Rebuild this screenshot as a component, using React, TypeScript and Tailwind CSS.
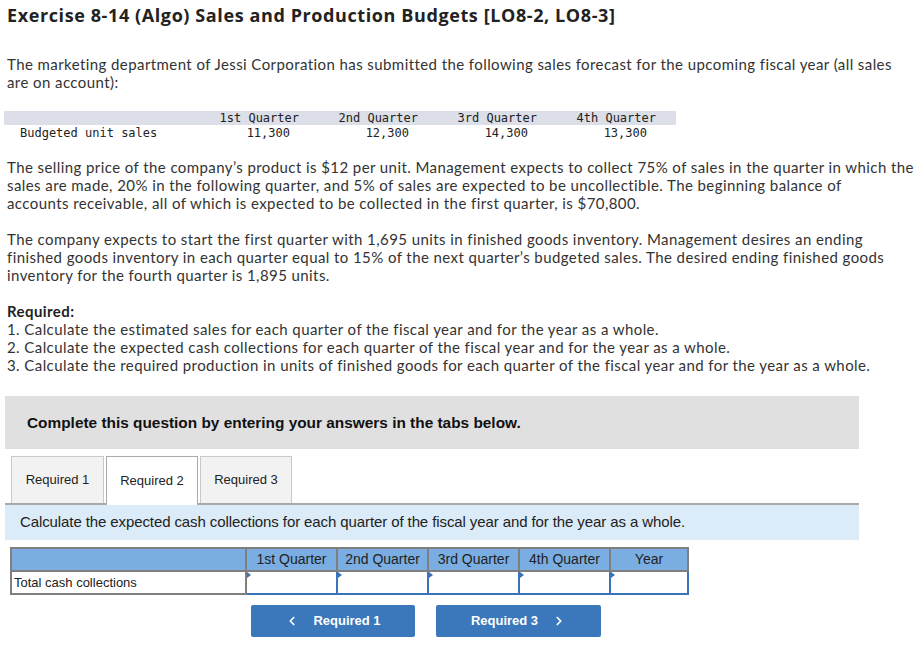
import { ChevronLeft, ChevronRight } from "lucide-react";

const body = "font-['Lato',sans-serif] text-[15px] leading-[18px] tracking-[0.42px] text-[#333]";

const quarters = ["1st Quarter", "2nd Quarter", "3rd Quarter", "4th Quarter"];
const unitSales = ["11,300", "12,300", "14,300", "13,300"];

const Lines = ({ lines }: { lines: string[] }) => (
  <>
    {lines.map((l) => (
      <div key={l} className="whitespace-nowrap">
        {l}
      </div>
    ))}
  </>
);

const InputCell = () => (
  <td className="relative h-[22px] border-2 border-[#3b73b9] bg-white p-0">
    {/* little marker triangle */}
    <span className="absolute left-0 top-0 h-0 w-0 border-y-[3px] border-l-[4px] border-y-transparent border-l-[#3b73b9]" />
  </td>
);

export default function App() {
  return (
    <div className="min-h-screen w-[915px] bg-white">
      <div className="px-[7px] pt-[4px]">
        {/* Title */}
        <h1 className="font-['Open_Sans',sans-serif] text-[18px] font-bold leading-[22px] tracking-[0.6px] text-[#222]">
          Exercise 8-14 (Algo) Sales and Production Budgets [LO8-2, LO8-3]
        </h1>

        <div className={`${body} mt-[29px]`}>
          <Lines
            lines={[
              "The marketing department of Jessi Corporation has submitted the following sales forecast for the upcoming fiscal year (all sales",
              "are on account):",
            ]}
          />
        </div>
      </div>

      {/* Unit sales forecast */}
      <table className="ml-[4px] mt-[20px] border-collapse font-['DejaVu_Sans_Mono',monospace] text-[12px] leading-[13px] text-[#222]">
        <thead>
          <tr className="bg-[#dcdfe8]">
            <th className="w-[196px] p-0" />
            {quarters.map((q) => (
              <th key={q} className="w-[119px] p-0 pr-[20px] pt-[1px] text-right font-normal">
                {q}
              </th>
            ))}
          </tr>
        </thead>
        <tbody>
          <tr>
            <td className="pl-[16px] pt-[2px] text-left">Budgeted unit sales</td>
            {unitSales.map((v) => (
              <td key={v} className="pr-[29px] pt-[2px] text-right">
                {v}
              </td>
            ))}
          </tr>
        </tbody>
      </table>

      <div className={`${body} px-[7px]`}>
        <div className="mt-[18px]">
          <Lines
            lines={[
              "The selling price of the company’s product is $12 per unit. Management expects to collect 75% of sales in the quarter in which the",
              "sales are made, 20% in the following quarter, and 5% of sales are expected to be uncollectible. The beginning balance of",
              "accounts receivable, all of which is expected to be collected in the first quarter, is $70,800.",
            ]}
          />
        </div>
        <div className="mt-[18px]">
          <Lines
            lines={[
              "The company expects to start the first quarter with 1,695 units in finished goods inventory. Management desires an ending",
              "finished goods inventory in each quarter equal to 15% of the next quarter’s budgeted sales. The desired ending finished goods",
              "inventory for the fourth quarter is 1,895 units.",
            ]}
          />
        </div>
        <div className="mt-[18px]">
          <div className="font-bold text-[#222]">Required:</div>
          <Lines
            lines={[
              "1. Calculate the estimated sales for each quarter of the fiscal year and for the year as a whole.",
              "2. Calculate the expected cash collections for each quarter of the fiscal year and for the year as a whole.",
              "3. Calculate the required production in units of finished goods for each quarter of the fiscal year and for the year as a whole.",
            ]}
          />
        </div>
      </div>

      {/* Tabs area */}
      <div className="ml-[5px] mt-[22px] w-[854px]">
        <div className="flex h-[53px] items-center bg-[#e0e0e0] pl-[22px] font-['Liberation_Sans',sans-serif] text-[15.4px] font-bold text-[#111]">
          Complete this question by entering your answers in the tabs below.
        </div>

        <div className="mt-[7px] flex gap-[2px] border-b-2 border-[#a9a9a9] pl-[6px] font-['Liberation_Sans',sans-serif] text-[13px] text-[#222]">
          <div className="-mb-[2px] flex h-[47px] w-[93px] items-center justify-center border border-b-0 border-[#c9c9c9] bg-[#f2f2f2]">
            Required 1
          </div>
          <div className="-mb-[2px] flex h-[49px] w-[92px] items-center justify-center border border-b-0 border-[#a9a9a9] bg-white">
            Required 2
          </div>
          <div className="-mb-[2px] flex h-[47px] w-[92px] items-center justify-center border border-b-0 border-[#c9c9c9] bg-[#f2f2f2]">
            Required 3
          </div>
        </div>

        <div className="flex h-[35px] items-center bg-[#dbebf8] pl-[15px] font-['Liberation_Sans',sans-serif] text-[15px] tracking-[-0.1px] text-[#222]">
          Calculate the expected cash collections for each quarter of the fiscal year and for the year as a whole.
        </div>

        {/* Answer table */}
        <table className="ml-[5px] mt-[7px] border-collapse font-['Liberation_Sans',sans-serif] text-[13px] text-[#222]">
          <thead>
            <tr className="h-[23px] bg-[#7aaee3] text-[14px]">
              <th className="w-[235px] border-2 border-r-0 border-[#7f7f7f]" />
              {quarters.map((q) => (
                <th key={q} className="w-[91px] border-2 border-[#7f7f7f] px-0 text-center font-normal">
                  {q}
                </th>
              ))}
              <th className="w-[78px] border-2 border-[#7f7f7f] text-center font-normal">Year</th>
            </tr>
          </thead>
          <tbody>
            <tr className="h-[23px]">
              <td className="border-2 border-[#7f7f7f] pl-[2px] pt-[1px] text-left">Total cash collections</td>
              <InputCell />
              <InputCell />
              <InputCell />
              <InputCell />
              <InputCell />
            </tr>
          </tbody>
        </table>

        {/* Nav buttons */}
        <div className="ml-[246px] mt-[10px] flex gap-[21px] font-['Liberation_Sans',sans-serif] text-[13px] font-bold text-white">
          <button className="flex h-[32px] w-[164px] items-center justify-center gap-[14px] rounded-[2px] bg-[#3b77bb]">
            <ChevronLeft className="h-[14px] w-[14px]" strokeWidth={3} />
            Required 1
          </button>
          <button className="flex h-[32px] w-[165px] items-center justify-center gap-[14px] rounded-[2px] bg-[#3b77bb]">
            Required 3
            <ChevronRight className="h-[14px] w-[14px]" strokeWidth={3} />
          </button>
        </div>
      </div>
    </div>
  );
}
